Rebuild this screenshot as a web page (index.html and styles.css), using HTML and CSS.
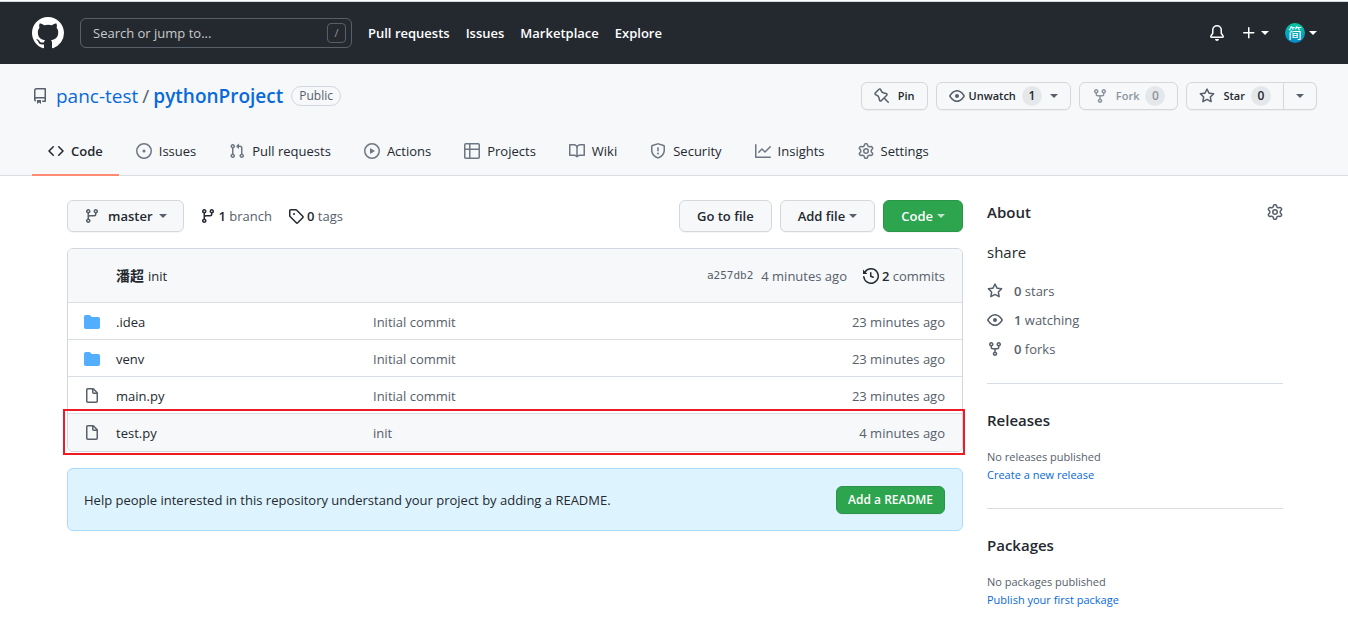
FILE: index.html
```html
<!DOCTYPE html>
<html lang="en">
<head>
  <meta charset="UTF-8" />
  <meta name="viewport" content="width=device-width, initial-scale=1.0"/>
  <title>panc-test/pythonProject</title>
  <link rel="stylesheet" href="styles.css">
</head>
<body>

  <!-- Icon set -->
  <svg class="icon-set" aria-hidden="true">
    <symbol id="mark" viewBox="0 0 16 16"><path fill-rule="evenodd" d="M8 0C3.58 0 0 3.58 0 8c0 3.54 2.29 6.53 5.47 7.59.4.07.55-.17.55-.38 0-.19-.01-.82-.01-1.49-2.01.37-2.53-.49-2.69-.94-.09-.23-.48-.94-.82-1.13-.28-.15-.68-.52-.01-.53.63-.01 1.08.58 1.23.82.72 1.21 1.87.87 2.33.66.07-.52.28-.87.51-1.07-1.78-.2-3.64-.89-3.64-3.95 0-.87.31-1.59.82-2.15-.08-.2-.36-1.02.08-2.12 0 0 .67-.21 2.2.82.64-.18 1.32-.27 2-.27.68 0 1.36.09 2 .27 1.53-1.04 2.2-.82 2.2-.82.44 1.1.16 1.92.08 2.12.51.56.82 1.27.82 2.15 0 3.07-1.87 3.75-3.65 3.95.29.25.54.73.54 1.48 0 1.07-.01 1.93-.01 2.2 0 .21.15.46.55.38A8.013 8.013 0 0016 8c0-4.42-3.58-8-8-8z"/></symbol>
    <symbol id="bell" viewBox="0 0 16 16"><path d="M8 16a2 2 0 001.985-1.75c.017-.137-.097-.25-.235-.25h-3.5c-.138 0-.252.113-.235.25A2 2 0 008 16z"/><path fill-rule="evenodd" d="M8 1.5A3.5 3.5 0 004.5 5v2.947c0 .346-.102.683-.294.97l-1.703 2.556a.018.018 0 00-.003.01l.001.006c0 .002.002.004.004.006a.017.017 0 00.006.004l.007.001h10.964l.007-.001a.016.016 0 00.006-.004.016.016 0 00.004-.006l.001-.007a.017.017 0 00-.003-.01l-1.703-2.554a1.75 1.75 0 01-.294-.97V5A3.5 3.5 0 008 1.5zM3 5a5 5 0 0110 0v2.947c0 .05.015.098.042.139l1.703 2.555A1.518 1.518 0 0113.482 13H2.518a1.518 1.518 0 01-1.263-2.36l1.703-2.554A.25.25 0 003 7.947V5z"/></symbol>
    <symbol id="plus" viewBox="0 0 16 16"><path d="M7.75 2a.75.75 0 01.75.75V7h4.25a.75.75 0 110 1.5H8.5v4.25a.75.75 0 11-1.5 0V8.5H2.75a.75.75 0 010-1.5H7V2.75A.75.75 0 017.75 2z"/></symbol>
    <symbol id="repo" viewBox="0 0 16 16"><path fill-rule="evenodd" d="M2 2.5A2.5 2.5 0 014.5 0h8.75a.75.75 0 01.75.75v12.5a.75.75 0 01-.75.75h-2.5a.75.75 0 110-1.5h1.75v-2h-8a1 1 0 00-.714 1.7.75.75 0 01-1.072 1.05A2.495 2.495 0 012 11.5v-9zm10.5-1V9h-8c-.356 0-.694.074-1 .208V2.5a1 1 0 011-1h8zM5 12.25v3.25a.25.25 0 00.4.2l1.45-1.087a.25.25 0 01.3 0L8.6 15.7a.25.25 0 00.4-.2v-3.25a.25.25 0 00-.25-.25h-3.5a.25.25 0 00-.25.25z"/></symbol>
    <symbol id="pin" viewBox="0 0 16 16"><path fill-rule="evenodd" d="M4.456.734a1.75 1.75 0 012.826.504l.613 1.327a3.081 3.081 0 002.084 1.707l2.454.584c1.332.317 1.8 1.972.832 2.94L11.06 10l3.72 3.72a.75.75 0 11-1.061 1.06L10 11.06l-2.204 2.205c-.968.968-2.623.5-2.94-.832l-.584-2.454a3.081 3.081 0 00-1.707-2.084l-1.327-.613a1.75 1.75 0 01-.504-2.826L4.456.734zM5.92 1.866a.25.25 0 00-.404-.072L1.794 5.516a.25.25 0 00.072.404l1.328.613A4.582 4.582 0 015.73 9.63l.584 2.454a.25.25 0 00.42.12l5.47-5.47a.25.25 0 00-.12-.42L9.63 5.73a4.581 4.581 0 01-3.098-2.537L5.92 1.866z"/></symbol>
    <symbol id="eye" viewBox="0 0 16 16"><path fill-rule="evenodd" d="M1.679 7.932c.412-.621 1.242-1.75 2.366-2.717C5.175 4.242 6.527 3.5 8 3.5c1.473 0 2.824.742 3.955 1.715 1.124.967 1.954 2.096 2.366 2.717a.119.119 0 010 .136c-.412.621-1.242 1.75-2.366 2.717C10.825 11.758 9.473 12.5 8 12.5c-1.473 0-2.824-.742-3.955-1.715C2.92 9.818 2.09 8.69 1.679 8.068a.119.119 0 010-.136zM8 2c-1.981 0-3.67.992-4.933 2.078C1.797 5.169.88 6.423.43 7.1a1.619 1.619 0 000 1.798c.45.678 1.367 1.932 2.637 3.024C4.329 13.008 6.019 14 8 14c1.981 0 3.67-.992 4.933-2.078 1.27-1.091 2.187-2.345 2.637-3.023a1.619 1.619 0 000-1.798c-.45-.678-1.367-1.932-2.637-3.023C11.671 2.992 9.981 2 8 2zm0 8a2 2 0 100-4 2 2 0 000 4z"/></symbol>
    <symbol id="fork" viewBox="0 0 16 16"><path fill-rule="evenodd" d="M5 3.25a.75.75 0 11-1.5 0 .75.75 0 011.5 0zm0 2.122a2.25 2.25 0 10-1.5 0v.878A2.25 2.25 0 005.75 8.5h1.5v2.128a2.251 2.251 0 101.5 0V8.5h1.5a2.25 2.25 0 002.25-2.25v-.878a2.25 2.25 0 10-1.5 0v.878a.75.75 0 01-.75.75h-4.5A.75.75 0 015 6.25v-.878zm3.75 7.378a.75.75 0 11-1.5 0 .75.75 0 011.5 0zm3-8.75a.75.75 0 100-1.5.75.75 0 000 1.5z"/></symbol>
    <symbol id="star" viewBox="0 0 16 16"><path fill-rule="evenodd" d="M8 .25a.75.75 0 01.673.418l1.882 3.815 4.21.612a.75.75 0 01.416 1.279l-3.046 2.97.719 4.192a.75.75 0 01-1.088.791L8 12.347l-3.766 1.98a.75.75 0 01-1.088-.79l.72-4.194L.818 6.374a.75.75 0 01.416-1.28l4.21-.611L7.327.668A.75.75 0 018 .25zm0 2.445L6.615 5.5a.75.75 0 01-.564.41l-3.097.45 2.24 2.184a.75.75 0 01.216.664l-.528 3.084 2.769-1.456a.75.75 0 01.698 0l2.77 1.456-.53-3.084a.75.75 0 01.216-.664l2.24-2.183-3.096-.45a.75.75 0 01-.564-.41L8 2.694v.001z"/></symbol>
    <symbol id="code" viewBox="0 0 16 16"><path fill-rule="evenodd" d="M4.72 3.22a.75.75 0 011.06 1.06L2.06 8l3.72 3.72a.75.75 0 11-1.06 1.06L.47 8.53a.75.75 0 010-1.06l4.25-4.25zm6.56 0a.75.75 0 10-1.06 1.06L13.94 8l-3.72 3.72a.75.75 0 101.06 1.06l4.25-4.25a.75.75 0 000-1.06l-4.25-4.25z"/></symbol>
    <symbol id="issue" viewBox="0 0 16 16"><path d="M8 9.5a1.5 1.5 0 100-3 1.5 1.5 0 000 3z"/><path fill-rule="evenodd" d="M8 0a8 8 0 100 16A8 8 0 008 0zM1.5 8a6.5 6.5 0 1113 0 6.5 6.5 0 01-13 0z"/></symbol>
    <symbol id="pull" viewBox="0 0 16 16"><path fill-rule="evenodd" d="M7.177 3.073L9.573.677A.25.25 0 0110 .854v4.792a.25.25 0 01-.427.177L7.177 3.427a.25.25 0 010-.354zM3.75 2.5a.75.75 0 100 1.5.75.75 0 000-1.5zm-2.25.75a2.25 2.25 0 113 2.122v5.256a2.251 2.251 0 11-1.5 0V5.372A2.25 2.25 0 011.5 3.25zM11 2.5h-1V4h1a1 1 0 011 1v5.628a2.251 2.251 0 101.5 0V5A2.5 2.5 0 0011 2.5zm1 10.25a.75.75 0 111.5 0 .75.75 0 01-1.5 0zM3.75 12a.75.75 0 100 1.5.75.75 0 000-1.5z"/></symbol>
    <symbol id="play" viewBox="0 0 16 16"><path fill-rule="evenodd" d="M1.5 8a6.5 6.5 0 1113 0 6.5 6.5 0 01-13 0zM8 0a8 8 0 100 16A8 8 0 008 0zM6.379 5.227A.25.25 0 006 5.442v5.117a.25.25 0 00.379.214l4.264-2.559a.25.25 0 000-.428L6.379 5.227z"/></symbol>
    <symbol id="project" viewBox="0 0 16 16"><path fill-rule="evenodd" d="M1.75 0A1.75 1.75 0 000 1.75v12.5C0 15.216.784 16 1.75 16h12.5A1.75 1.75 0 0016 14.25V1.75A1.75 1.75 0 0014.25 0H1.75zM1.5 1.75a.25.25 0 01.25-.25H5v4H1.5V1.75zM5 7H1.5v7.25c0 .138.112.25.25.25H5V7zm1.5 0v7.5h7.75a.25.25 0 00.25-.25V7h-8zm8-1.5h-8v-4h7.75a.25.25 0 01.25.25V5.5z"/></symbol>
    <symbol id="book" viewBox="0 0 16 16"><path fill-rule="evenodd" d="M0 1.75A.75.75 0 01.75 1h4.253c1.227 0 2.317.59 3 1.501A3.744 3.744 0 0111.006 1h4.245a.75.75 0 01.75.75v10.5a.75.75 0 01-.75.75h-4.507a2.25 2.25 0 00-1.591.659l-.622.621a.75.75 0 01-1.06 0l-.622-.621A2.25 2.25 0 005.258 13H.75a.75.75 0 01-.75-.75V1.75zm8.755 3a2.25 2.25 0 012.25-2.25H14.5v9h-3.757c-.71 0-1.4.201-1.992.572l.004-7.322zm-1.504 7.324l.004-5.073-.002-2.253A2.25 2.25 0 005.003 2.5H1.5v9h3.757a3.75 3.75 0 011.994.574z"/></symbol>
    <symbol id="shield" viewBox="0 0 16 16"><path fill-rule="evenodd" d="M7.467.133a1.75 1.75 0 011.066 0l5.25 1.68A1.75 1.75 0 0115 3.48V7c0 1.566-.32 3.182-1.303 4.682-.983 1.498-2.585 2.813-5.032 3.855a1.7 1.7 0 01-1.33 0c-2.447-1.042-4.049-2.357-5.032-3.855C1.32 10.182 1 8.566 1 7V3.48a1.75 1.75 0 011.217-1.667l5.25-1.68zm.61 1.429a.25.25 0 00-.153 0l-5.25 1.68a.25.25 0 00-.174.238V7c0 1.358.275 2.666 1.057 3.86.784 1.194 2.121 2.34 4.366 3.297a.2.2 0 00.154 0c2.245-.956 3.582-2.104 4.366-3.298C13.225 9.666 13.5 8.36 13.5 7V3.48a.25.25 0 00-.174-.237l-5.25-1.68zM9 10.5a1 1 0 11-2 0 1 1 0 012 0zm-.25-5.75a.75.75 0 10-1.5 0v3a.75.75 0 001.5 0v-3z"/></symbol>
    <symbol id="graph" viewBox="0 0 16 16"><path fill-rule="evenodd" d="M1.5 1.75a.75.75 0 00-1.5 0v12.5c0 .414.336.75.75.75h14.5a.75.75 0 000-1.5H1.5V1.75zm14.28 2.53a.75.75 0 00-1.06-1.06L10 7.94 7.53 5.47a.75.75 0 00-1.06 0L3.22 8.72a.75.75 0 001.06 1.06L7 7.06l2.47 2.47a.75.75 0 001.06 0l5.25-5.25z"/></symbol>
    <symbol id="gear" viewBox="0 0 16 16"><path fill-rule="evenodd" d="M7.429 1.525a6.593 6.593 0 011.142 0c.036.003.108.036.137.146l.289 1.105c.147.56.55.967.997 1.189.174.086.341.183.501.29.417.278.97.423 1.53.27l1.102-.303c.11-.03.175.016.195.046.219.31.41.641.573.989.014.031.022.11-.059.19l-.815.806c-.411.406-.562.957-.53 1.456a4.588 4.588 0 010 .582c-.032.499.119 1.05.53 1.456l.815.806c.08.08.073.159.059.19a6.494 6.494 0 01-.573.99c-.02.029-.086.074-.195.045l-1.103-.303c-.559-.153-1.112-.008-1.529.27-.16.107-.327.204-.5.29-.449.222-.851.628-.998 1.189l-.289 1.105c-.029.11-.101.143-.137.146a6.613 6.613 0 01-1.142 0c-.036-.003-.108-.037-.137-.146l-.289-1.105c-.147-.56-.55-.967-.997-1.189a4.502 4.502 0 01-.501-.29c-.417-.278-.97-.423-1.53-.27l-1.102.303c-.11.03-.175-.016-.195-.046a6.492 6.492 0 01-.573-.989c-.014-.031-.022-.11.059-.19l.815-.806c.411-.406.562-.957.53-1.456a4.587 4.587 0 010-.582c.032-.499-.119-1.05-.53-1.456l-.815-.806c-.08-.08-.073-.159-.059-.19a6.44 6.44 0 01.573-.99c.02-.029.086-.075.195-.045l1.103.303c.559.153 1.112.008 1.529-.27.16-.107.327-.204.5-.29.449-.222.851-.628.998-1.189l.289-1.105c.029-.11.101-.143.137-.146zM8 0c-.236 0-.47.01-.701.03-.743.065-1.29.615-1.458 1.261l-.29 1.106c-.017.066-.078.158-.211.224a5.994 5.994 0 00-.668.386c-.123.082-.233.09-.3.071L3.27 2.776c-.644-.177-1.392.02-1.82.63a7.977 7.977 0 00-.704 1.217c-.315.675-.111 1.422.363 1.891l.815.806c.05.048.098.147.088.294a6.084 6.084 0 000 .772c.01.147-.038.246-.088.294l-.815.806c-.474.469-.678 1.216-.363 1.891.2.428.436.835.704 1.218.428.609 1.176.806 1.82.63l1.103-.303c.066-.019.176-.011.299.071.213.143.436.272.668.386.133.066.194.158.212.224l.289 1.106c.169.646.715 1.196 1.458 1.26a8.094 8.094 0 001.402 0c.743-.064 1.29-.614 1.458-1.26l.29-1.106c.017-.066.078-.158.211-.224a5.98 5.98 0 00.668-.386c.123-.082.233-.09.3-.071l1.102.302c.644.177 1.392-.02 1.82-.63.268-.382.505-.789.704-1.217.315-.675.111-1.422-.364-1.891l-.814-.806c-.05-.048-.098-.147-.088-.294a6.1 6.1 0 000-.772c-.01-.147.039-.246.088-.294l.814-.806c.475-.469.679-1.216.364-1.891a7.992 7.992 0 00-.704-1.218c-.428-.609-1.176-.806-1.82-.63l-1.103.303c-.066.019-.176.011-.299-.071a5.991 5.991 0 00-.668-.386c-.133-.066-.194-.158-.212-.224L10.16 1.29C9.99.645 9.444.095 8.701.031A8.094 8.094 0 008 0zm1.5 8a1.5 1.5 0 11-3 0 1.5 1.5 0 013 0zM11 8a3 3 0 11-6 0 3 3 0 016 0z"/></symbol>
    <symbol id="branch" viewBox="0 0 16 16"><path fill-rule="evenodd" d="M11.75 2.5a.75.75 0 100 1.5.75.75 0 000-1.5zm-2.25.75a2.25 2.25 0 113 2.122V6A2.5 2.5 0 0110 8.5H6a1 1 0 00-1 1v1.128a2.251 2.251 0 11-1.5 0V5.372a2.25 2.25 0 111.5 0v1.836A2.492 2.492 0 016 7h4a1 1 0 001-1v-.628A2.25 2.25 0 019.5 3.25zM4.25 12a.75.75 0 100 1.5.75.75 0 000-1.5zM3.5 3.25a.75.75 0 111.5 0 .75.75 0 01-1.5 0z"/></symbol>
    <symbol id="tag" viewBox="0 0 16 16"><path fill-rule="evenodd" d="M2.5 7.775V2.75a.25.25 0 01.25-.25h5.025a.25.25 0 01.177.073l6.25 6.25a.25.25 0 010 .354l-5.025 5.025a.25.25 0 01-.354 0l-6.25-6.25a.25.25 0 01-.073-.177zm-1.5 0V2.75C1 1.784 1.784 1 2.75 1h5.025c.464 0 .91.184 1.238.513l6.25 6.25a1.75 1.75 0 010 2.474l-5.026 5.026a1.75 1.75 0 01-2.474 0l-6.25-6.25A1.75 1.75 0 011 7.775zM6 5a1 1 0 100 2 1 1 0 000-2z"/></symbol>
    <symbol id="history" viewBox="0 0 16 16"><path fill-rule="evenodd" d="M1.643 3.143L.427 1.927A.25.25 0 000 2.104V5.75c0 .138.112.25.25.25h3.646a.25.25 0 00.177-.427L2.715 4.215a6.5 6.5 0 11-1.18 4.458.75.75 0 10-1.493.154 8.001 8.001 0 101.6-5.684zM7.75 4a.75.75 0 01.75.75v2.992l2.028.812a.75.75 0 01-.557 1.392l-2.5-1A.75.75 0 017 8.25v-3.5A.75.75 0 017.75 4z"/></symbol>
    <symbol id="folder" viewBox="0 0 16 16"><path d="M1.75 1A1.75 1.75 0 000 2.75v10.5C0 14.216.784 15 1.75 15h12.5A1.75 1.75 0 0016 13.25v-8.5A1.75 1.75 0 0014.25 3h-6.5a.25.25 0 01-.2-.1l-.9-1.2c-.33-.44-.85-.7-1.4-.7h-3.5z"/></symbol>
    <symbol id="file" viewBox="0 0 16 16"><path fill-rule="evenodd" d="M3.75 1.5a.25.25 0 00-.25.25v11.5c0 .138.112.25.25.25h8.5a.25.25 0 00.25-.25V6H9.75A1.75 1.75 0 018 4.25V1.5H3.75zm5.75.56v2.19c0 .138.112.25.25.25h2.19L9.5 2.06zM2 1.75C2 .784 2.784 0 3.75 0h5.086c.464 0 .909.184 1.237.513l3.414 3.414c.329.328.513.773.513 1.237v8.086A1.75 1.75 0 0112.25 15h-8.5A1.75 1.75 0 012 13.25V1.75z"/></symbol>
  </svg>

  <!-- Top bar -->
  <header class="topbar">
    <a class="logo" href="#" aria-label="Homepage"><svg class="mark"><use href="#mark"/></svg></a>
    <div class="search">
      <input type="text" id="search" aria-label="Search" placeholder="Search or jump to...">
      <span class="search-key">/</span>
    </div>
    <nav class="top-links">
      <a href="#">Pull requests</a>
      <a href="#">Issues</a>
      <a href="#">Marketplace</a>
      <a href="#">Explore</a>
    </nav>
    <div class="top-actions">
      <button class="top-btn" aria-label="Notifications"><svg class="icon"><use href="#bell"/></svg></button>
      <button class="top-btn" aria-label="Create new"><svg class="icon"><use href="#plus"/></svg><span class="caret"></span></button>
      <button class="top-btn" aria-label="Account"><span class="avatar">简</span><span class="caret"></span></button>
    </div>
  </header>

  <!-- Repository header -->
  <div class="repo-head">
    <div class="repo-title-row">
      <h1 class="repo-title">
        <svg class="icon"><use href="#repo"/></svg>
        <a href="#">panc-test</a>
        <span class="slash">/</span>
        <a class="repo-name" href="#">pythonProject</a>
        <span class="label">Public</span>
      </h1>
      <div class="repo-actions">
        <button class="btn btn-sm btn-pin"><svg class="icon"><use href="#pin"/></svg>Pin</button>
        <button class="btn btn-sm btn-watch"><svg class="icon"><use href="#eye"/></svg>Unwatch<span class="counter">1</span><span class="caret"></span></button>
        <button class="btn btn-sm btn-fork" disabled><svg class="icon"><use href="#fork"/></svg>Fork<span class="counter">0</span></button>
        <div class="btn-group">
          <button class="btn btn-sm btn-star"><svg class="icon"><use href="#star"/></svg>Star<span class="counter">0</span></button>
          <button class="btn btn-sm btn-list" aria-label="Lists"><span class="caret"></span></button>
        </div>
      </div>
    </div>
    <nav class="tabs">
      <a class="tab active" href="#"><svg class="icon"><use href="#code"/></svg>Code</a>
      <a class="tab" href="#"><svg class="icon"><use href="#issue"/></svg>Issues</a>
      <a class="tab" href="#"><svg class="icon"><use href="#pull"/></svg>Pull requests</a>
      <a class="tab" href="#"><svg class="icon"><use href="#play"/></svg>Actions</a>
      <a class="tab" href="#"><svg class="icon"><use href="#project"/></svg>Projects</a>
      <a class="tab" href="#"><svg class="icon"><use href="#book"/></svg>Wiki</a>
      <a class="tab" href="#"><svg class="icon"><use href="#shield"/></svg>Security</a>
      <a class="tab" href="#"><svg class="icon"><use href="#graph"/></svg>Insights</a>
      <a class="tab" href="#"><svg class="icon"><use href="#gear"/></svg>Settings</a>
    </nav>
  </div>

  <div class="container">
    <main class="content">
      <div class="file-nav">
        <button class="btn btn-branch"><svg class="icon"><use href="#branch"/></svg>master<span class="caret"></span></button>
        <a class="ref-link" href="#"><svg class="icon"><use href="#branch"/></svg><span><strong>1</strong> branch</span></a>
        <a class="ref-link" href="#"><svg class="icon"><use href="#tag"/></svg><span><strong>0</strong> tags</span></a>
        <div class="file-actions">
          <button class="btn">Go to file</button>
          <button class="btn">Add file<span class="caret"></span></button>
          <button class="btn btn-primary">Code<span class="caret"></span></button>
        </div>
      </div>

      <!-- File list -->
      <div class="file-box">
        <div class="file-list">
          <div class="commit-bar">
            <a class="author" href="#">潘超</a>
            <a class="commit-msg" href="#">init</a>
            <a class="sha" href="#">a257db2</a>
            <span class="muted">4 minutes ago</span>
            <a class="ref-link commits" href="#"><svg class="icon"><use href="#history"/></svg><span><strong>2</strong> commits</span></a>
          </div>
          <table class="files">
            <tbody>
              <tr>
                <td class="col-icon"><svg class="icon folder"><use href="#folder"/></svg></td>
                <td class="col-name"><a href="#">.idea</a></td>
                <td class="col-msg"><a href="#">Initial commit</a></td>
                <td class="col-age">23 minutes ago</td>
              </tr>
              <tr>
                <td class="col-icon"><svg class="icon folder"><use href="#folder"/></svg></td>
                <td class="col-name"><a href="#">venv</a></td>
                <td class="col-msg"><a href="#">Initial commit</a></td>
                <td class="col-age">23 minutes ago</td>
              </tr>
              <tr>
                <td class="col-icon"><svg class="icon"><use href="#file"/></svg></td>
                <td class="col-name"><a href="#">main.py</a></td>
                <td class="col-msg"><a href="#">Initial commit</a></td>
                <td class="col-age">23 minutes ago</td>
              </tr>
              <tr class="current">
                <td class="col-icon"><svg class="icon"><use href="#file"/></svg></td>
                <td class="col-name"><a href="#">test.py</a></td>
                <td class="col-msg"><a href="#">init</a></td>
                <td class="col-age">4 minutes ago</td>
              </tr>
            </tbody>
          </table>
        </div>
        <div class="marker"></div>
      </div>

      <div class="flash">
        <span>Help people interested in this repository understand your project by adding a README.</span>
        <button class="btn btn-sm btn-primary">Add a README</button>
      </div>
    </main>

    <!-- Sidebar -->
    <aside class="sidebar">
      <section class="side-block">
        <div class="side-head">
          <h2>About</h2>
          <a class="muted" href="#" aria-label="Edit details"><svg class="icon"><use href="#gear"/></svg></a>
        </div>
        <p class="about">share</p>
        <ul class="stats">
          <li><a href="#"><svg class="icon"><use href="#star"/></svg><span><strong>0</strong> stars</span></a></li>
          <li><a href="#"><svg class="icon"><use href="#eye"/></svg><span><strong>1</strong> watching</span></a></li>
          <li><a href="#"><svg class="icon"><use href="#fork"/></svg><span><strong>0</strong> forks</span></a></li>
        </ul>
      </section>
      <section class="side-block">
        <h2>Releases</h2>
        <p class="small">No releases published<br><a href="#">Create a new release</a></p>
      </section>
      <section class="side-block">
        <h2>Packages</h2>
        <p class="small">No packages published<br><a href="#">Publish your first package</a></p>
      </section>
    </aside>
  </div>

</body>
</html>
```

FILE: styles.css
```css
* {
  box-sizing: border-box;
}

body {
  margin: 0;
  border-top: 1px solid #fff;
  font-family: "Open Sans", "Noto Sans CJK SC", sans-serif;
  font-size: 13px;
  line-height: 20px;
  color: #24292f;
  background-color: #fff;
}

a {
  color: inherit;
  text-decoration: none;
}

h1, h2, p, ul {
  margin: 0;
  padding: 0;
}

strong {
  font-weight: 600;
}

.icon-set {
  display: none;
}

.icon {
  width: 16px;
  height: 16px;
  flex: none;
  display: block;
  fill: currentColor;
}

.caret {
  border: 4px solid transparent;
  border-top-color: currentColor;
  border-bottom-width: 0;
}

.muted {
  color: #57606a;
}

/* Top bar */
.topbar {
  display: flex;
  align-items: center;
  gap: 16px;
  height: 63px;
  padding: 0 31px 0 32px;
  border-top: 1px solid #d0d7de;
  background-color: #24292f;
  color: #fff;
}

.mark {
  display: block;
  width: 32px;
  height: 32px;
  fill: #fff;
}

.search {
  display: flex;
  align-items: center;
  width: 272px;
  height: 30px;
  padding: 0 5px 0 12px;
  border: 1px solid #57606a;
  border-radius: 6px;
}

.search input {
  flex: 1;
  min-width: 0;
  padding: 0;
  border: none;
  outline: none;
  background: none;
  color: #fff;
  font: inherit;
}

.search input::placeholder {
  color: #c8cacc;
}

.search-key {
  width: 19px;
  height: 20px;
  border: 1px solid #57606a;
  border-radius: 4px;
  color: #8c959f;
  font-size: 11px;
  line-height: 18px;
  text-align: center;
}

.top-links {
  display: flex;
  gap: 16px;
  font-weight: 600;
}

.top-actions {
  display: flex;
  align-items: center;
  gap: 16px;
  margin-left: auto;
}

.top-btn {
  display: flex;
  align-items: center;
  gap: 4px;
  padding: 0;
  border: none;
  background: none;
  color: #fff;
  font: inherit;
}

.avatar {
  width: 20px;
  height: 20px;
  border-radius: 50%;
  background: linear-gradient(#06c8a0, #0788cc);
  font-size: 14px;
  text-align: center;
}

/* Repository header */
.repo-head {
  padding-top: 16px;
  border-bottom: 1px solid #d8dee4;
  background-color: #f6f8fa;
}

.repo-title-row {
  display: flex;
  justify-content: space-between;
  align-items: center;
  height: 32px;
  margin-bottom: 16px;
  padding: 0 31px 0 32px;
}

.repo-title {
  display: flex;
  align-items: center;
  font-size: 19px;
  font-weight: 400;
  color: #57606a;
}

.repo-title .icon {
  margin-right: 8px;
}

.repo-title a {
  color: #0969da;
}

.repo-title .slash {
  margin: 0 4px;
}

.repo-title .repo-name {
  font-weight: 600;
}

.label {
  margin-left: 8px;
  padding: 0 7px;
  border: 1px solid #d0d7de;
  border-radius: 20px;
  font-size: 12px;
  font-weight: 500;
  line-height: 18px;
}

.repo-actions {
  display: flex;
  gap: 8px;
}

.btn {
  display: flex;
  align-items: center;
  height: 32px;
  padding: 0 16px;
  border: 1px solid #d5d8da;
  border-radius: 6px;
  background-color: #f6f8fa;
  box-shadow: 0 1px 0 rgba(27, 31, 36, 0.04);
  color: #24292f;
  font-family: inherit;
  font-size: 13px;
  font-weight: 600;
  line-height: 20px;
  white-space: nowrap;
}

.btn .icon,
.btn .caret {
  color: #57606a;
}

.btn .caret {
  margin-left: 4px;
}

.btn-sm {
  height: 28px;
  padding: 0 12px;
  font-size: 11px;
}

.btn-pin .icon,
.btn-fork .icon,
.btn-star .icon,
.btn-branch .icon {
  margin-right: 8px;
}

.btn-watch .icon {
  margin-right: 4px;
}

.btn-watch .caret {
  margin-left: 8px;
}

.btn-branch .caret {
  margin-left: 6px;
}

.btn-fork,
.btn-fork .icon {
  color: #8c959f;
}

.btn-primary {
  border-color: #2a9549;
  background-color: #2da44e;
  color: #fff;
}

.btn-primary .caret {
  color: #c0e4ca;
}

.counter {
  min-width: 20px;
  height: 20px;
  margin-left: 6px;
  padding: 0 6px;
  border-radius: 10px;
  background-color: #e5e8eb;
  font-size: 12px;
}

.btn-group {
  display: flex;
}

.btn-star {
  border-radius: 6px 0 0 6px;
}

.btn-list {
  border-left: none;
  border-radius: 0 6px 6px 0;
}

.btn-list .caret {
  margin-left: 0;
}

.tabs {
  display: flex;
  gap: 1px;
  margin-bottom: -1px;
  padding: 0 32px;
}

.tab {
  display: flex;
  align-items: center;
  gap: 7px;
  height: 48px;
  padding: 0 16px;
  border-bottom: 2px solid transparent;
}

.tab .icon {
  color: #6e7781;
}

.tab.active {
  border-bottom-color: #fd8c73;
  font-weight: 600;
}

.tab.active .icon {
  color: #24292f;
}

/* Page body */
.container {
  display: flex;
  gap: 24px;
  max-width: 1280px;
  margin: 24px auto 0;
  padding: 0 31px 0 33px;
}

.content {
  flex: 1;
  min-width: 0;
}

.file-nav {
  display: flex;
  align-items: center;
  gap: 16px;
  margin-bottom: 16px;
}

.ref-link {
  display: flex;
  align-items: center;
  gap: 3px;
  color: #57606a;
}

.ref-link .icon,
.ref-link strong {
  color: #24292f;
}

.file-actions {
  display: flex;
  gap: 8px;
  margin-left: auto;
}

.file-actions .btn {
  padding: 0 17px;
}

.file-box {
  position: relative;
  margin-bottom: 16px;
}

.file-list {
  border: 1px solid #d0d7de;
  border-radius: 6px;
  overflow: hidden;
}

.commit-bar {
  display: flex;
  align-items: center;
  height: 53px;
  padding: 0 17px 0 48px;
  background-color: #f6f8fa;
}

.author {
  font-size: 14px;
  font-weight: 700;
}

.commit-msg {
  margin-left: 4px;
}

.sha {
  margin: 0 8px 0 auto;
  color: #57606a;
  font-family: "DejaVu Sans Mono", monospace;
  font-size: 11px;
}

.commits {
  margin-left: 16px;
}

.files {
  width: 100%;
  border-collapse: collapse;
  table-layout: fixed;
}

.files td {
  height: 37px;
  padding: 2px 0 0;
  border-top: 1px solid #d8dee4;
  color: #57606a;
}

.files .col-icon {
  width: 48px;
  padding-left: 16px;
}

.files .col-name {
  width: 257px;
  color: #24292f;
}

.files .col-age {
  width: 160px;
  padding-right: 17px;
  text-align: right;
}

.files .folder {
  color: #54aeff;
}

.files .current {
  background-color: #f6f8fa;
}

/* red frame drawn round the last row */
.marker {
  position: absolute;
  right: -2px;
  bottom: -3px;
  left: -4px;
  height: 46px;
  border: 2px solid #ed1c24;
}

.flash {
  display: flex;
  justify-content: space-between;
  align-items: center;
  padding: 17px 17px 16px 16px;
  border: 1px solid #a9dcff;
  border-radius: 6px;
  background-color: #ddf4ff;
}

.flash .btn {
  font-size: 12px;
  padding: 0 11px;
}

/* Sidebar */
.sidebar {
  width: 296px;
}

.side-block {
  padding-bottom: 24px;
  margin-bottom: 24px;
  border-bottom: 1px solid #d8dee4;
}

.side-block:last-child {
  margin-bottom: 0;
  padding-bottom: 0;
  border-bottom: none;
}

.side-head {
  display: flex;
  justify-content: space-between;
  align-items: center;
}

.side-block h2 {
  margin-bottom: 16px;
  font-size: 15px;
  font-weight: 600;
  line-height: 24px;
}

.side-head .icon {
  margin-bottom: 16px;
}

.about {
  margin-bottom: 17px;
  font-size: 15px;
  line-height: 24px;
}

.stats {
  list-style: none;
  color: #57606a;
}

.stats li + li {
  margin-top: 9px;
}

.stats a {
  display: flex;
  align-items: center;
  gap: 11px;
}

.small {
  color: #57606a;
  font-size: 11px;
  line-height: 18px;
}

.small a {
  color: #0969da;
}
```
